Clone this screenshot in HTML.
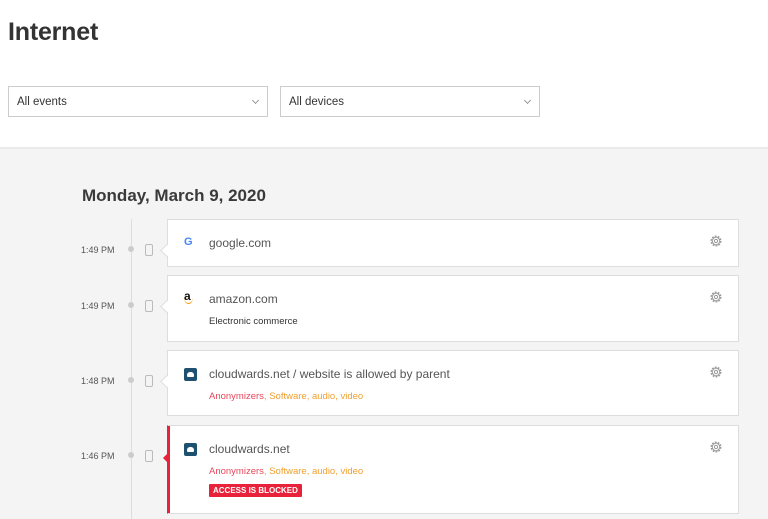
<!DOCTYPE html>
<html><head><meta charset="utf-8"><style>
*{box-sizing:border-box;margin:0;padding:0}
body{width:768px;height:519px;overflow:hidden;font-family:"Liberation Sans",sans-serif;background:#f4f4f4;position:relative;color:#444}
.top{position:absolute;left:0;top:0;width:768px;height:149px;background:#fff;border-bottom:2px solid #eaeaea}
h1{position:absolute;left:8px;top:18px;font-size:25px;font-weight:bold;color:#333;letter-spacing:-0.2px;-webkit-text-stroke:0}
.sel{position:absolute;top:86px;height:31px;border:1px solid #ccc;background:#fff;font-size:11.5px;color:#333;padding:9px 0 0 8px}
.sel:after{content:"";position:absolute;right:9px;top:11px;width:4px;height:4px;border-right:1px solid #999;border-bottom:1px solid #999;transform:rotate(45deg)}
.date{position:absolute;left:82px;top:186px;font-size:17px;font-weight:bold;color:#3a3a3a}
.line{position:absolute;left:131px;top:219px;width:1px;height:300px;background:#ddd}
.time{position:absolute;left:81px;font-size:9px;color:#555}
.dot{position:absolute;left:128px;width:6px;height:6px;border-radius:50%;background:#ccc}
.ph{position:absolute;left:145px;width:8px;height:12px;border:1.3px solid #bbb;border-radius:2px}
.card{position:absolute;left:167px;width:572px;background:#fff;border:1px solid #ddd}
.arr{position:absolute;left:-6px;width:9px;height:9px;background:#fff;border-left:1px solid #ddd;border-bottom:1px solid #ddd;transform:rotate(45deg)}
.t{position:absolute;left:41px;top:16px;font-size:12px;color:#555}
.s{position:absolute;left:41px;font-size:9.5px;color:#333}
.ic{position:absolute;left:16px;top:17px;width:13px;height:13px}
.gear{position:absolute;right:15px;top:14px;width:14px;height:14px}
.r{color:#e8465a}.o{color:#f0a030}
.cl{background:#1e5070;border-radius:2px}
.cl:after{content:"";position:absolute;left:3px;top:4px;width:7px;height:5px;background:#fff;border-radius:3px 3px 1px 1px}
</style></head><body>
<div class="top">
<h1>Internet</h1>
<div class="sel" style="left:8px;width:260px">All events</div>
<div class="sel" style="left:280px;width:260px">All devices</div>
</div>
<div class="date">Monday, March 9, 2020</div>
<div class="line"></div>

<div class="time" style="top:245px">1:49 PM</div><div class="dot" style="top:246px"></div><div class="ph" style="top:244px"></div>
<div class="card" style="top:219px;height:48px"><div class="arr" style="top:26px"></div>
<span class="ic" style="font-weight:bold;font-size:11px;color:#4285f4;top:16px">G</span>
<div class="t">google.com</div>
<svg class="gear" viewBox="0 0 14 14"><circle cx="7" cy="7" r="4.6" fill="none" stroke="#999" stroke-width="1.8" stroke-dasharray="1.8 1.1"/><circle cx="7" cy="7" r="3.6" fill="none" stroke="#999" stroke-width=".8"/><circle cx="7" cy="7" r="1.6" fill="none" stroke="#999"/></svg></div>

<div class="time" style="top:301px">1:49 PM</div><div class="dot" style="top:302px"></div><div class="ph" style="top:300px"></div>
<div class="card" style="top:275px;height:67px"><div class="arr" style="top:26px"></div>
<span class="ic" style="font-weight:bold;font-size:12px;color:#111;top:15px;border-bottom:1.5px solid #f90;border-radius:0 0 50% 50%;height:13px;width:9px;line-height:11px">a</span>
<div class="t">amazon.com</div><div class="s" style="top:40px">Electronic commerce</div>
<svg class="gear" viewBox="0 0 14 14"><circle cx="7" cy="7" r="4.6" fill="none" stroke="#999" stroke-width="1.8" stroke-dasharray="1.8 1.1"/><circle cx="7" cy="7" r="3.6" fill="none" stroke="#999" stroke-width=".8"/><circle cx="7" cy="7" r="1.6" fill="none" stroke="#999"/></svg></div>

<div class="time" style="top:376px">1:48 PM</div><div class="dot" style="top:377px"></div><div class="ph" style="top:375px"></div>
<div class="card" style="top:350px;height:66px"><div class="arr" style="top:26px"></div>
<span class="ic cl"></span>
<div class="t">cloudwards.net / website is allowed by parent</div><div class="s" style="top:40px"><span class="r">Anonymizers</span><span class="o">, Software, audio, video</span></div>
<svg class="gear" viewBox="0 0 14 14"><circle cx="7" cy="7" r="4.6" fill="none" stroke="#999" stroke-width="1.8" stroke-dasharray="1.8 1.1"/><circle cx="7" cy="7" r="3.6" fill="none" stroke="#999" stroke-width=".8"/><circle cx="7" cy="7" r="1.6" fill="none" stroke="#999"/></svg></div>

<div class="time" style="top:451px">1:46 PM</div><div class="dot" style="top:452px"></div><div class="ph" style="top:450px"></div>
<div class="card" style="top:425px;height:89px;box-shadow:inset 2px 0 0 #e8223a;border-left-color:#e8223a">
<div style="position:absolute;left:-5px;top:27px;width:0;height:0;border-top:5px solid transparent;border-bottom:5px solid transparent;border-right:5px solid #e8223a"></div>
<span class="ic cl"></span>
<div class="t">cloudwards.net</div><div class="s" style="top:40px"><span class="r">Anonymizers</span><span class="o">, Software, audio, video</span></div>
<div style="position:absolute;left:41px;top:58px;background:#e8223a;color:#fff;font-size:8px;font-weight:bold;padding:2px 4px;border-radius:1px">ACCESS IS BLOCKED</div>
<svg class="gear" viewBox="0 0 14 14"><circle cx="7" cy="7" r="4.6" fill="none" stroke="#999" stroke-width="1.8" stroke-dasharray="1.8 1.1"/><circle cx="7" cy="7" r="3.6" fill="none" stroke="#999" stroke-width=".8"/><circle cx="7" cy="7" r="1.6" fill="none" stroke="#999"/></svg></div>
</body></html>
